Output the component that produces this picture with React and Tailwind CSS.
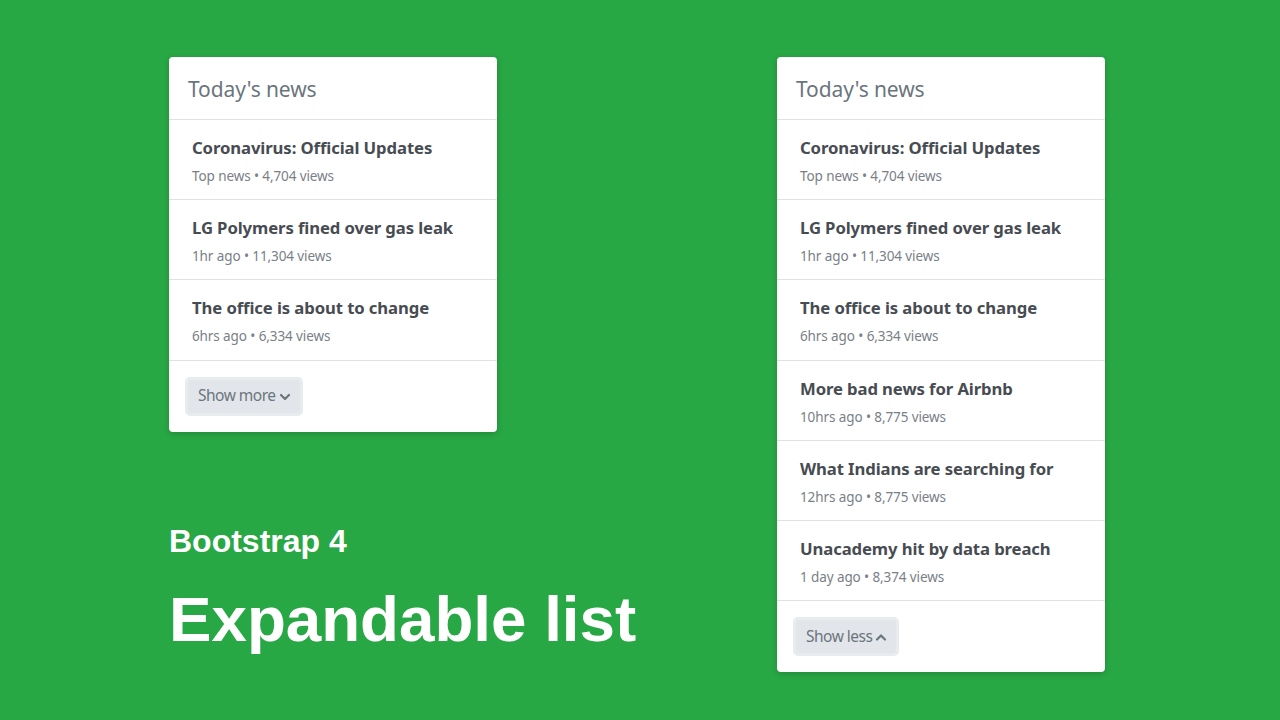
import React, { useState } from 'react';

const allNews = [
  { title: 'Coronavirus: Official Updates', meta: 'Top news • 4,704 views' },
  { title: 'LG Polymers fined over gas leak', meta: '1hr ago • 11,304 views' },
  { title: 'The office is about to change', meta: '6hrs ago • 6,334 views' },
  { title: 'More bad news for Airbnb', meta: '10hrs ago • 8,775 views' },
  { title: 'What Indians are searching for', meta: '12hrs ago • 8,775 views' },
  { title: 'Unacademy hit by data breach', meta: '1 day ago • 8,374 views' },
];

const Chevron = ({ up }) => (
  <svg width="12" height="12" viewBox="0 0 12 12" className="ml-[3px] mt-[1px]">
    <path
      d={up ? 'M2 8.5 L6 4.5 L10 8.5' : 'M2 4 L6 8 L10 4'}
      fill="none"
      stroke="#6c757d"
      strokeWidth="2.2"
      strokeLinecap="round"
      strokeLinejoin="round"
    />
  </svg>
);

const NewsCard = ({ initialOpen }) => {
  const [open, setOpen] = useState(initialOpen);
  const items = open ? allNews : allNews.slice(0, 3);

  return (
    <div className="w-[328px] bg-white rounded-[4px] shadow-[0_2px_6px_rgba(0,0,0,0.18)] font-['Noto_Sans',sans-serif]">
      <div className="h-[63px] px-[19px] pt-[4px] flex items-center border-b border-[#dee2e6]">
        <h5 className="text-[21px] text-[#6c757d] tracking-[-0.1px]">Today's news</h5>
      </div>
      {items.map((item) => (
        <div key={item.title} className="h-[80.2px] px-[23px] pt-[16px] border-b border-[#dee2e6]">
          <div className="text-[16.7px] font-bold text-[#474c52] leading-[24px] tracking-[-0.1px]">{item.title}</div>
          <div className="text-[13.5px] text-[#7a8087] mt-[6px] leading-[20px] tracking-[-0.1px]">{item.meta}</div>
        </div>
      ))}
      <div className="h-[71px] px-[16px] pt-[16px]">
        <button
          onClick={() => setOpen(!open)}
          className="h-[39px] pl-[10px] pr-[9px] flex items-center bg-[#e2e6ea] border-[3px] border-[#e9ecef] rounded-[5px] text-[15.5px] text-[#6c757d] tracking-[-0.5px]"
        >
          {open ? 'Show less' : 'Show more'}
          <Chevron up={open} />
        </button>
      </div>
    </div>
  );
};

export default function App() {
  return (
    <div className="w-[1280px] h-[720px] bg-[#28a745] flex pl-[169px] pt-[57px] overflow-hidden">
      <div className="w-[328px] flex flex-col">
        <NewsCard initialOpen={false} />
        <div className="mt-[91px] font-['Liberation_Sans',Arial,sans-serif] text-white font-bold">
          <div className="text-[32px] leading-[36px]">Bootstrap 4</div>
          <div className="text-[63.7px] leading-[70px] mt-[25px] whitespace-nowrap">Expandable list</div>
        </div>
      </div>
      <div className="ml-[280px]">
        <NewsCard initialOpen={true} />
      </div>
    </div>
  );
}
